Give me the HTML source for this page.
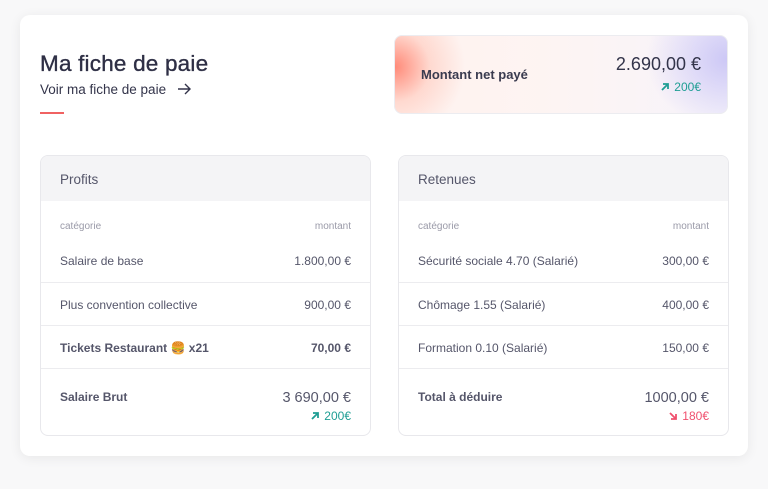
<!DOCTYPE html>
<html><head><meta charset="utf-8"><style>
*{box-sizing:border-box;margin:0;padding:0}
body{width:768px;height:489px;background:#f8f8f9;font-family:"Liberation Sans",sans-serif;position:relative;overflow:hidden;color:#3a3b4f}
.card{position:absolute;left:20px;top:15px;width:728px;height:441px;background:#fff;border-radius:10px;box-shadow:0 2px 12px rgba(0,0,0,.07)}
h1{position:absolute;left:40px;top:51px;font-size:22.5px;font-weight:normal;color:#2e2f45;letter-spacing:.2px;-webkit-text-stroke:.35px #2e2f45}
.voir{position:absolute;left:40px;top:82px;font-size:13.5px;color:#33344a}
.red{position:absolute;left:40px;top:112px;width:24px;height:2px;background:#f06262}
.net{position:absolute;left:394px;top:35px;width:334px;height:79px;border-radius:8px;border:1px solid #ececf0;
background:radial-gradient(ellipse 70px 70px at 0% 40%,rgba(255,120,100,.85),rgba(255,170,150,.35) 50%,transparent 100%),
radial-gradient(ellipse 80px 70px at 100% 30%,rgba(200,195,245,.9),transparent 100%),
linear-gradient(90deg,#fff2ee,#fdf4f3 50%,#f6f3fb);}
.net .l{position:absolute;left:26px;top:31px;font-size:13px;font-weight:bold;color:#3a3b4f}
.net .v{position:absolute;right:26px;top:18px;font-size:18px;color:#33344a}
.net .d{position:absolute;right:26px;top:44px;font-size:12px;color:#1f9e94}
.panel{position:absolute;top:155px;width:331px;height:281px;border:1px solid #e8e8ec;border-radius:8px;overflow:hidden;background:#fff}
.ph{height:45px;background:#f4f4f6;padding:16px 0 0 19px;font-size:13.5px;color:#55566a}
.row{position:absolute;left:0;right:0;border-top:1px solid #ececef;font-size:12px;color:#55566a}
.row span{position:absolute}
.lab{left:19px}.val{right:19px}
.cat{position:absolute;top:65px;font-size:10px;color:#9a9aa8}
.b{font-weight:bold}
svg.ar{vertical-align:-1px;margin-right:4px}
</style></head><body>
<div class="card"></div>
<h1>Ma fiche de paie</h1>
<div class="voir">Voir ma fiche de paie &nbsp;&nbsp;<svg width="14" height="12" viewBox="0 0 14 12" style="vertical-align:-1px"><path d="M1 6H13M8 1L13 6L8 11" fill="none" stroke="#33344a" stroke-width="1.4"/></svg></div>
<div class="red"></div>
<div class="net"><div class="l">Montant net payé</div><div class="v">2.690,00 €</div><div class="d"><svg class="ar" width="10" height="10" viewBox="0 0 10 10"><path d="M2 8L8 2M3 2H8V7" fill="none" stroke="#1f9e94" stroke-width="1.8"/></svg>200€</div></div>

<div class="panel" style="left:40px">
<div class="ph">Profits</div>
<span class="cat" style="left:19px">catégorie</span><span class="cat" style="right:19px">montant</span>
<div class="row" style="top:84px;border:none"><span class="lab" style="top:14px">Salaire de base</span><span class="val" style="top:14px">1.800,00 €</span></div>
<div class="row" style="top:126px"><span class="lab" style="top:15px">Plus convention collective</span><span class="val" style="top:15px">900,00 €</span></div>
<div class="row b" style="top:169px"><span class="lab" style="top:15px">Tickets Restaurant 🍔 x21</span><span class="val" style="top:15px">70,00 €</span></div>
<div class="row" style="top:212px"><span class="lab b" style="top:21px">Salaire Brut</span><span class="val" style="top:21px;font-size:14.5px">3 690,00 €</span><span class="val" style="top:40px;color:#1f9e94"><svg class="ar" width="10" height="10" viewBox="0 0 10 10"><path d="M2 8L8 2M3 2H8V7" fill="none" stroke="#1f9e94" stroke-width="1.8"/></svg>200€</span></div>
</div>

<div class="panel" style="left:398px">
<div class="ph">Retenues</div>
<span class="cat" style="left:19px">catégorie</span><span class="cat" style="right:19px">montant</span>
<div class="row" style="top:84px;border:none"><span class="lab" style="top:14px">Sécurité sociale 4.70 (Salarié)</span><span class="val" style="top:14px">300,00 €</span></div>
<div class="row" style="top:126px"><span class="lab" style="top:15px">Chômage 1.55 (Salarié)</span><span class="val" style="top:15px">400,00 €</span></div>
<div class="row" style="top:169px"><span class="lab" style="top:15px">Formation 0.10 (Salarié)</span><span class="val" style="top:15px">150,00 €</span></div>
<div class="row" style="top:212px"><span class="lab b" style="top:21px">Total à déduire</span><span class="val" style="top:21px;font-size:14.5px">1000,00 €</span><span class="val" style="top:40px;color:#f0506e"><svg class="ar" width="10" height="10" viewBox="0 0 10 10"><path d="M2 2L8 8M3 8H8V3" fill="none" stroke="#f0506e" stroke-width="1.8"/></svg>180€</span></div>
</div>
</body></html>
